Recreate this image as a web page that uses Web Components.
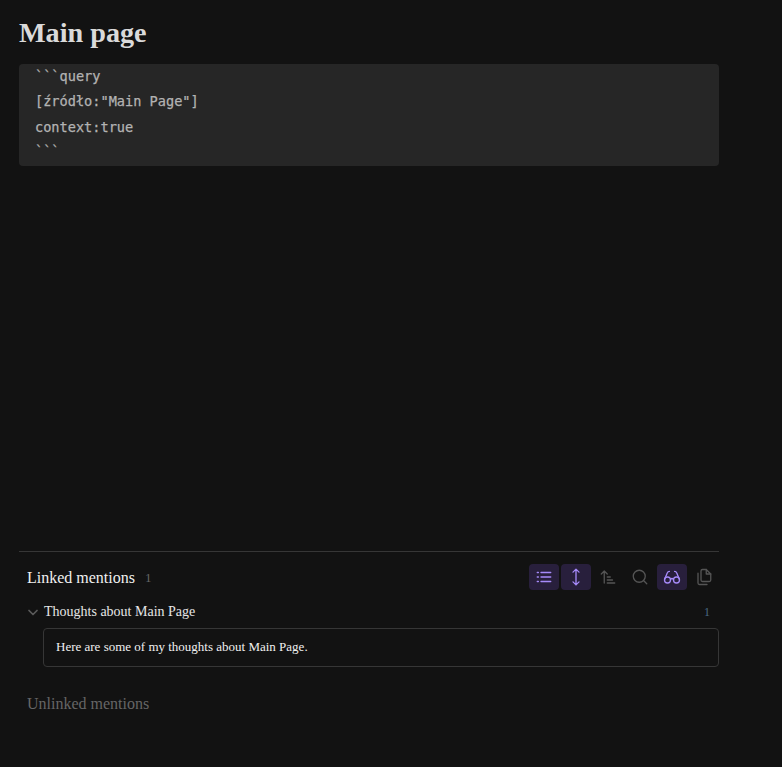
<!DOCTYPE html>
<html><head><meta charset="utf-8">
<style>
html,body{margin:0;height:100%;background:#121212;}
body{font-family:"Liberation Serif",serif;}
</style></head><body>
<md-page>
<note-title slot="title">Main page</note-title>
<code-block slot="code"><code-line h="24">```query</code-line><code-line h="26">[źródło:"Main Page"]</code-line><code-line h="26">context:true</code-line><code-line h="22">```</code-line></code-block>
<backlink-pane slot="pane"></backlink-pane>
</md-page>
<script>
function def(name,html){customElements.define(name,class extends HTMLElement{constructor(){super();this.attachShadow({mode:'open'}).innerHTML=html;}});}
def('md-page',`<style>:host{display:flex;flex-direction:column;width:700px;height:767px;padding:0 0 0 19px;box-sizing:content-box;}
.grow{flex:1}</style><slot name="title"></slot><slot name="code"></slot><div class="grow"></div><slot name="pane"></slot>`);
def('note-title',`<style>:host{display:block;font:bold 28.2px/34px "Liberation Serif",serif;color:#dadada;padding-top:16px;height:64px;box-sizing:border-box;}</style><slot></slot>`);
def('code-block',`<style>:host{display:block;background:#262626;border-radius:4px;height:102px;box-sizing:border-box;padding:0 16px;font:13.6px "DejaVu Sans Mono",monospace;color:#b3b3b3;-webkit-text-stroke:.25px #b3b3b3;}</style><slot></slot>`);
customElements.define('code-line',class extends HTMLElement{constructor(){super();const h=this.getAttribute('h')||25;this.attachShadow({mode:'open'}).innerHTML=`<style>:host{display:block;height:${h}px;line-height:${h}px}</style><slot></slot>`;}});
const I=(p,c,sw=1.75)=>`<svg width="18" height="18" viewBox="0 0 24 24" fill="none" stroke="${c}" stroke-width="${sw}" stroke-linecap="round" stroke-linejoin="round">${p}</svg>`;
def('tool-btn',`<style>:host{display:flex;align-items:center;justify-content:center;width:30px;height:26px;border-radius:4px;}
:host([on]){background:#281f3c;}
::slotted(svg){display:block}</style><slot></slot>`);
def('backlink-pane',`<style>:host{display:block;height:216px;border-top:1px solid #363636;box-sizing:border-box;color:#dadada;}
.head{display:flex;align-items:center;height:52px;padding:0 0 0 8px;}
.t{font-size:16px;color:#f0f0f0}.n{font-size:13px;color:#666;margin-left:10px}
.tools{margin-left:auto;display:flex;gap:2px;margin-top:-2px}
.file{display:flex;align-items:center;height:20px;margin-top:-2px;padding-left:8px;font-size:14px;color:#e6e6e6}
.file svg{margin-right:5px}.c{margin-left:auto;margin-right:9px;font-size:12px;color:#4a6a85}
.match{margin:6px 0 0 24px;height:39px;box-sizing:border-box;border:1px solid #363636;border-radius:4px;padding:0 12px;font-size:13px;line-height:36px;color:#f0f0f0}
.un{margin:27px 0 0 8px;font-size:16px;line-height:20px;color:#666}
</style>
<div class="head"><span class="t">Linked mentions</span><span class="n">1</span>
<div class="tools">
<tool-btn on>${I('<path d="M8 6h13M8 12h13M8 18h13M3 6h1.500M3 12h1.500M3 18h1.500"/>','#a68af9')}</tool-btn>
<tool-btn on>${I('<path d="M12 1.500v21M8 5.500l4-4 4 4M8 18.500l4 4 4-4"/>','#a68af9')}</tool-btn>
<tool-btn>${I('<path d="M7 20V4M3 8l4-4 4 4M11 12h4M11 16h7M11 20h10"/>','#555')}</tool-btn>
<tool-btn>${I('<circle cx="11" cy="11" r="8"/><path d="M21 21l-4.3-4.3"/>','#555')}</tool-btn>
<tool-btn on>${I('<circle cx="6" cy="16" r="4"/><circle cx="18" cy="16" r="4"/><path d="M10 16a2 2 0 0 1 4 0M2.200 15 5.500 7c.7-1.600 1.600-2.500 3-2.500M21.800 15 18.500 7c-.7-1.600-1.600-2.500-3-2.500"/>','#a68af9')}</tool-btn>
<tool-btn>${I('<path d="M15 2H10a2 2 0 0 0-2 2v12a2 2 0 0 0 2 2h9a2 2 0 0 0 2-2V8z"/><path d="M15 2v6h6"/><path d="M4 7v13a2 2 0 0 0 2 2h10"/>','#555')}</tool-btn>
</div></div>
<div class="file"><svg width="12" height="12" viewBox="0 0 24 24" fill="none" stroke="#5a5a5a" stroke-width="3.500" stroke-linecap="round" stroke-linejoin="round"><path d="M4 9l8 8 8-8"/></svg><span>Thoughts about Main Page</span><span class="c">1</span></div>
<div class="match">Here are some of my thoughts about Main Page.</div>
<div class="un">Unlinked mentions</div>`);
</script>
</body></html>
